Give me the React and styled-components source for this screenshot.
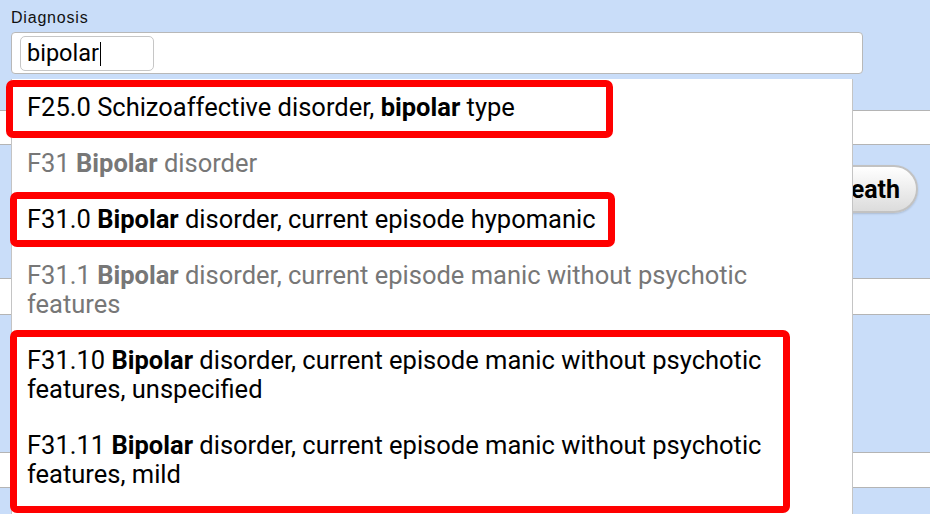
import styled, { createGlobalStyle } from "styled-components";

const GlobalStyle = createGlobalStyle`
  html, body {
    margin: 0;
    padding: 0;
    background: #ffffff;
    overflow: hidden;
  }
  body {
    font-family: Roboto, "Liberation Sans", Arial, sans-serif;
  }
`;

const options = [
  { code: "F25.0", before: "Schizoaffective disorder, ", match: "bipolar", after: " type", active: true },
  { code: "F31", before: "", match: "Bipolar", after: " disorder", active: false },
  { code: "F31.0", before: "", match: "Bipolar", after: " disorder, current episode hypomanic", active: true },
  {
    code: "F31.1",
    before: "",
    match: "Bipolar",
    after: " disorder, current episode manic without psychotic features",
    active: false,
  },
  {
    code: "F31.10",
    before: "",
    match: "Bipolar",
    after: " disorder, current episode manic without psychotic features, unspecified",
    active: true,
  },
  {
    code: "F31.11",
    before: "",
    match: "Bipolar",
    after: " disorder, current episode manic without psychotic features, mild",
    active: true,
  },
];

// annotation boxes drawn on top of the list (page coords)
const marks = [
  { left: 6, top: 80, width: 607, height: 58 },
  { left: 10, top: 192, width: 605, height: 55 },
  { left: 10, top: 330, width: 780, height: 183 },
];

function App() {
  return (
    <Page>
      <GlobalStyle />
      <Row tone="blue" h={110}>
        <FieldLabel>Diagnosis</FieldLabel>
        <FieldWrap>
          <OuterBox>
            <SearchBox>
              bipolar
              <Caret />
            </SearchBox>
          </OuterBox>
          <Dropdown>
            {options.map((o) => (
              <Option key={o.code} active={o.active}>
                {o.code} {o.before}
                <b>{o.match}</b>
                {o.after}
              </Option>
            ))}
            {marks.map((m, i) => (
              <Mark
                key={i}
                style={{ left: m.left - 12, top: m.top - 79, width: m.width, height: m.height }}
              />
            ))}
          </Dropdown>
        </FieldWrap>
      </Row>
      <Row tone="white" h={33} />
      <Row tone="blue" h={113} right>
        <PillButton>Death</PillButton>
      </Row>
      <Row tone="white" h={35} />
      <Row tone="blue" h={137} />
      <Row tone="white" h={34} />
      <Row tone="blue" h={33} />
      <Row tone="white" h={40} />
    </Page>
  );
}

const Page = styled.div`
  width: 930px;
  height: 514px;
  overflow: hidden;
  position: relative;
`;

const Row = styled.div`
  position: relative;
  box-sizing: content-box;
  height: ${(p) => p.h}px;
  background: ${(p) => (p.tone === "blue" ? "#c9ddf9" : "#ffffff")};
  border-bottom: 1px solid #b4b4b4;
  display: flex;
  flex-direction: column;
  align-items: ${(p) => (p.right ? "flex-end" : "stretch")};
  padding: ${(p) => (p.right ? "20px 12px 0 0" : "0")};
`;

const FieldLabel = styled.div`
  font-family: "Liberation Sans", Arial, sans-serif;
  font-size: 16px;
  letter-spacing: 0.8px;
  color: #111;
  padding: 9px 0 0 11px;
  height: 23px;
`;

const FieldWrap = styled.div`
  position: relative;
  margin-left: 11px;
  width: 852px;
  z-index: 5;
`;

const OuterBox = styled.div`
  box-sizing: border-box;
  height: 42px;
  border: 1px solid #b8b8b8;
  border-radius: 4px;
  background: #ffffff;
  padding: 3px 0 0 8px;
`;

const SearchBox = styled.div`
  box-sizing: border-box;
  width: 134px;
  height: 35px;
  border: 1px solid #c6c6c6;
  border-radius: 5px;
  background: #fff;
  font-size: 23.5px;
  line-height: 33px;
  padding-left: 6px;
  color: #000;
  display: flex;
  align-items: center;
`;

const Caret = styled.span`
  display: inline-block;
  width: 1.5px;
  height: 24px;
  background: #000;
  margin-left: 1px;
`;

const Dropdown = styled.div`
  position: absolute;
  top: 47px;
  left: 0;
  width: 842px;
  box-sizing: border-box;
  height: 460px;
  background: #ffffff;
  border-left: 1px solid #c4c4c4;
  border-right: 1px solid #c4c4c4;
  padding-right: 40px;
`;

const Option = styled.div`
  font-size: 25.5px;
  line-height: 29px;
  padding: 13.5px 0 13.5px 15px;
  color: ${(p) => (p.active ? "#000000" : "#777777")};

  b {
    font-weight: 700;
  }
`;

const Mark = styled.div`
  position: absolute;
  box-sizing: border-box;
  border: 7px solid #ff0000;
  border-radius: 7px;
  pointer-events: none;
`;

const PillButton = styled.button`
  height: 48px;
  padding: 0 16px 0 22px;
  border-radius: 24px;
  border: 2px solid #c2c2c2;
  background: linear-gradient(#ffffff, #dcdcdc);
  box-shadow: 0 1px 2px rgba(0, 0, 0, 0.15);
  font-family: Roboto, "Liberation Sans", Arial, sans-serif;
  font-size: 25px;
  font-weight: 700;
  color: #000;
`;

export default App;
